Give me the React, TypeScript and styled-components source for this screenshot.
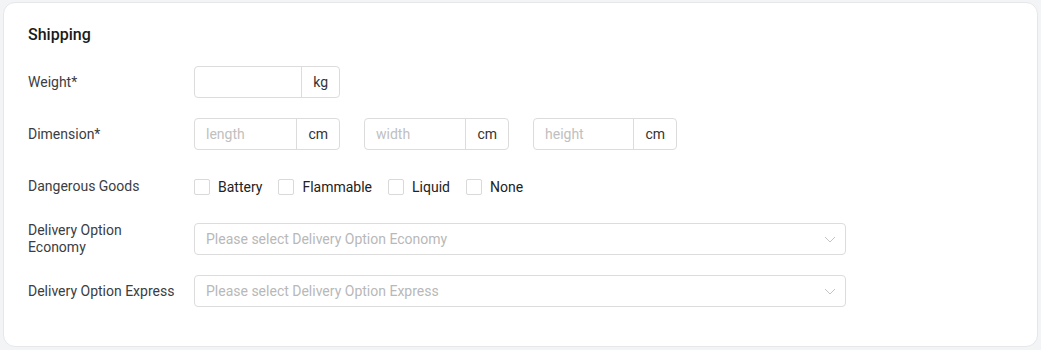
import styled, { createGlobalStyle } from "styled-components";

const GlobalStyle = createGlobalStyle`
  html, body {
    margin: 0;
    background: #f3f4f6;
    font-family: Roboto, "Liberation Sans", Arial, sans-serif;
  }
  body {
    padding: 2px 3px 3px 3px;
  }
`;

const Card = styled.section`
  background: #ffffff;
  border: 1px solid #e6e7ea;
  border-radius: 12px;
  padding: 22px 24px 39px 24px;
`;

const Title = styled.h2`
  margin: 0 0 21px 0;
  font-size: 16px;
  line-height: 20px;
  font-weight: 500;
  color: #1a1a1a;
`;

const Form = styled.div`
  display: flex;
  flex-direction: column;
  gap: 20px;
`;

const Row = styled.div<{ $height?: number }>`
  display: flex;
  align-items: center;
  gap: 16px;
  min-height: ${(p) => p.$height ?? 32}px;
`;

const Label = styled.div`
  width: 150px;
  flex-shrink: 0;
  margin: -1px 0;
  font-size: 14px;
  line-height: 17px;
  color: #3a3d42;
`;

const Fields = styled.div`
  display: flex;
  align-items: center;
  gap: 24px;
`;

const InputGroup = styled.div<{ $width: number }>`
  display: flex;
  width: ${(p) => p.$width}px;
  height: 32px;
  box-sizing: border-box;
  border: 1px solid #dcdcdc;
  border-radius: 4px;
  overflow: hidden;
`;

const Input = styled.input`
  flex: 1;
  min-width: 0;
  border: none;
  outline: none;
  padding: 0 11px;
  font-family: inherit;
  font-size: 14px;
  color: #333;
  background: transparent;

  &::placeholder {
    color: #c0c0c0;
  }
`;

const Suffix = styled.span`
  display: flex;
  align-items: center;
  padding: 0 11px;
  border-left: 1px solid #dcdcdc;
  font-size: 14px;
  color: #333;
`;

const CheckList = styled.div`
  display: flex;
  align-items: center;
  gap: 16px;
`;

const CheckItem = styled.label`
  display: flex;
  align-items: center;
  gap: 8px;
  font-size: 14px;
  color: #222;
`;

const Box = styled.span`
  width: 16px;
  height: 16px;
  box-sizing: border-box;
  border: 1px solid #d9d9d9;
  border-radius: 2px;
  background: #fff;
`;

const Select = styled.div`
  display: flex;
  align-items: center;
  justify-content: space-between;
  width: 652px;
  height: 32px;
  box-sizing: border-box;
  border: 1px solid #dcdcdc;
  border-radius: 4px;
  padding: 0 11px;
  font-size: 14px;
  color: #b8b8b8;
`;

const Chevron = styled.svg`
  width: 12px;
  height: 12px;
  margin-right: -2px;
`;

function ChevronDown() {
  return (
    <Chevron viewBox="0 0 12 12" fill="none" stroke="#c4c4c4" strokeWidth="1">
      <path d="M1 4l5 5 5-5" />
    </Chevron>
  );
}

const dims = [
  { name: "length", width: 146 },
  { name: "width", width: 145 },
  { name: "height", width: 144 },
];
const goods = ["Battery", "Flammable", "Liquid", "None"];

export default function App() {
  return (
    <>
      <GlobalStyle />
      <Card>
        <Title>Shipping</Title>
        <Form>
          <Row>
            <Label>Weight*</Label>
            <InputGroup $width={146}>
              <Input />
              <Suffix>kg</Suffix>
            </InputGroup>
          </Row>
          <Row>
            <Label>Dimension*</Label>
            <Fields>
              {dims.map((d) => (
                <InputGroup key={d.name} $width={d.width}>
                  <Input placeholder={d.name} />
                  <Suffix>cm</Suffix>
                </InputGroup>
              ))}
            </Fields>
          </Row>
          <Row $height={33}>
            <Label>Dangerous Goods</Label>
            <CheckList>
              {goods.map((g) => (
                <CheckItem key={g}>
                  <Box />
                  {g}
                </CheckItem>
              ))}
            </CheckList>
          </Row>
          <Row>
            <Label>Delivery Option Economy</Label>
            <Select>
              Please select Delivery Option Economy
              <ChevronDown />
            </Select>
          </Row>
          <Row>
            <Label>Delivery Option Express</Label>
            <Select>
              Please select Delivery Option Express
              <ChevronDown />
            </Select>
          </Row>
        </Form>
      </Card>
    </>
  );
}
